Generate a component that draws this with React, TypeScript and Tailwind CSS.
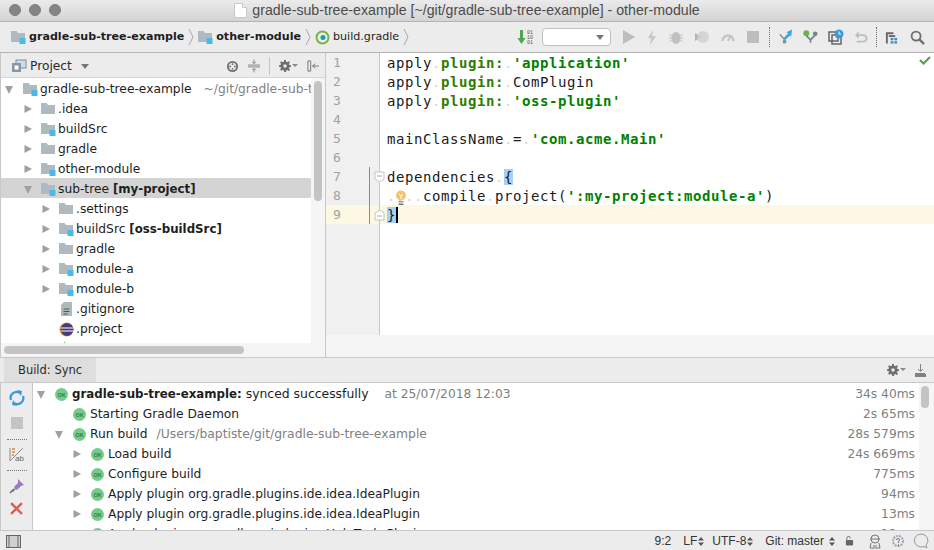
import React from "react";

const UI = "font-['Lucida_Grande','DejaVu_Sans',sans-serif]";

function Folder({ mod = false, color = "#afb9c0" }: { mod?: boolean; color?: string }) {
  return (
    <svg width="15" height="14" viewBox="0 0 15 14" className="shrink-0">
      <path d="M0 1h5.500L7 3h7v9H0z" fill={color} />
      {mod && <rect x="8.500" y="8" width="6" height="6" fill="#4ab9e8" />}
    </svg>
  );
}

function Arrow({ dir }: { dir: "r" | "d" | "n" }) {
  if (dir === "n") return <span className="w-[10px] shrink-0" />;
  return (
    <svg width="10" height="10" viewBox="0 0 10 10" className="shrink-0">
      {dir === "r" ? <path d="M1.500 1l7.500 4-7.500 4z" fill="#a0a0a0" /> : <path d="M1 2h8l-4 8z" fill="#a0a0a0" />}
    </svg>
  );
}

function Ok() {
  return (
    <svg width="13" height="13" viewBox="0 0 13 13" className="block shrink-0">
      <circle cx="6.500" cy="6.500" r="6.500" fill="#74cc8a" />
      <text x="6.500" y="8.500" textAnchor="middle" fontSize="5.500" fontWeight="700" fill="#3c7a4c" fontFamily="Liberation Sans">OK</text>
    </svg>
  );
}

function TreeRow({ depth, dir, icon, children, selected }: { depth: number; dir: "r" | "d" | "n"; icon: React.ReactNode; children: React.ReactNode; selected?: boolean }) {
  const pads: Record<number, string> = { 0: "pl-[3px]", 1: "pl-[22px]", 2: "pl-[40px]" };
  return (
    <div className={`flex h-5 items-center whitespace-nowrap pt-[2px] text-[12.250px] text-[#1e1e1e] ${pads[depth]} ${selected ? "bg-[#d4d4d4]" : ""}`}>
      <Arrow dir={dir} />
      <span className="ml-[8px] flex w-[15px] shrink-0 items-center justify-center">{icon}</span>
      <span className="ml-[2px]">{children}</span>
    </div>
  );
}

function BuildRow({ depth, dir, time, children }: { depth: number; dir: "r" | "d" | "n"; time: string; children: React.ReactNode }) {
  const pads: Record<number, string> = { 0: "pl-[3px]", 1: "pl-[21px]", 2: "pl-[39px]" };
  return (
    <div className={`flex h-5 items-center whitespace-nowrap pt-[2px] text-[12.250px] text-[#1e1e1e] ${pads[depth]}`}>
      <Arrow dir={dir} />
      <span className="ml-[9px]"><Ok /></span>
      <span className="ml-[4px] min-w-0 flex-1">{children}</span>
      <span className="pr-[4px] text-[#808080]">{time}</span>
    </div>
  );
}

const Bold = ({ children }: { children: React.ReactNode }) => <span className="text-[11.800px] font-bold">{children}</span>;
const D = () => <span className="text-[#d4d4d4]">.</span>;
const Kw = ({ children }: { children: React.ReactNode }) => <span className="font-bold text-[#2e7d00]">{children}</span>;
const S = ({ children }: { children: React.ReactNode }) => <span className="font-bold text-[#008000]">{children}</span>;

function CodeRow({ n, children, active, change, fold }: { n: number; children?: React.ReactNode; active?: boolean; change?: boolean; fold?: "open" | "close" }) {
  return (
    <div className={`flex h-[19px] ${active ? "bg-[#fcf8e4]" : ""}`}>
      <div className={`relative flex h-[19px] w-[54px] shrink-0 items-center border-r border-[#c8c8c8] pl-[7px] text-[13px] text-[#a0a0a0] ${active ? "bg-[#fcf8e4]" : "bg-[#f0f0f0]"}`}>
        <span className="font-['DejaVu_Sans_Mono',monospace]">{n}</span>
        {change && <span className="absolute left-[43px] top-0 h-[19px] w-px bg-[#7b8fb0]" />}
        {fold && (
          <svg width="11" height="12" viewBox="0 0 11 12" className="absolute left-[48px] top-[4px]">
            <path d={fold === "open" ? "M1 1h9v7l-4.500 3-4.500-3z" : "M1 11h9V4L5.500 1 1 4z"} fill="#fff" stroke="#c4c4c4" />
            <path d={fold === "open" ? "M3 5h5" : "M3 7h5"} stroke="#aaa" />
          </svg>
        )}
      </div>
      <div className="h-[19px] whitespace-pre pl-[7px] font-['DejaVu_Sans_Mono',monospace] text-[14px] leading-[21px] tracking-[0.570px] text-[#1a1a1a]">{children}</div>
    </div>
  );
}

function Gear() {
  return (
    <span className="flex items-center">
      <svg width="12" height="12" viewBox="0 0 14 14">
        <path d="M6 0h2l.4 2 1.400.6L11.500 1.400 12.800 2.800l-1.200 1.700.5 1.400 1.900.3v2l-1.900.4-.5 1.300 1.200 1.700-1.300 1.300-1.700-1.100-1.400.5L8 14H6l-.4-2.100-1.300-.5-1.700 1.100L1.200 11.200l1.200-1.700-.6-1.300L0 8V6l1.800-.3.6-1.400L1.200 2.800l1.400-1.400 1.700 1.200 1.300-.6z" fill="#6e6e6e" />
        <circle cx="7" cy="7" r="2" fill="#ececec" />
      </svg>
      <svg width="6" height="4" viewBox="0 0 6 4" className="ml-px"><path d="M0 0h6L3 3z" fill="#888" /></svg>
    </span>
  );
}

function Sep() {
  return <span className="mx-[8px] h-[20px] w-0 border-l border-dotted border-[#6e6e6e]" />;
}

function Chevron() {
  return (
    <svg width="6" height="18" viewBox="0 0 6 18" className="ml-[4px] shrink-0">
      <path d="M1 1l4 8-4 8" fill="none" stroke="#a6a6a6" />
    </svg>
  );
}

function UpDown() {
  return (
    <svg width="6" height="9" viewBox="0 0 6 9" className="ml-px shrink-0">
      <path d="M0 3.500L3 0l3 3.500zM0 5.500L3 9l3-3.500z" fill="#555" />
    </svg>
  );
}

export default function App() {
  return (
    <div className={`flex h-[550px] w-[934px] flex-col overflow-hidden bg-[#ececec] ${UI}`}>
      {/* title bar */}
      <div className="relative flex h-[22px] shrink-0 items-center justify-center border-b border-[#b4b4b4] bg-gradient-to-b from-[#ebebeb] to-[#d4d4d4]">
        <div className="absolute left-[9px] top-[4px] flex gap-[8px]">
          <span className="h-3 w-3 rounded-full border border-[#7c7c7c] bg-[#858585]" />
          <span className="h-3 w-3 rounded-full border border-[#7c7c7c] bg-[#858585]" />
          <span className="h-3 w-3 rounded-full border border-[#7c7c7c] bg-[#858585]" />
        </div>
        <svg width="13" height="15" viewBox="0 0 13 15" className="mr-[5px]">
          <path d="M.5.500h8l4 4v10H.5z" fill="#fff" stroke="#c8c8c8" />
          <path d="M8.500.500v4h4" fill="#eee" stroke="#c8c8c8" />
        </svg>
        <span className="font-['Liberation_Sans',sans-serif] text-[14.170px] leading-none text-[#4c4c4c]">gradle-sub-tree-example [~/git/gradle-sub-tree-example] - other-module</span>
      </div>

      {/* nav bar */}
      <div className="flex h-[31px] shrink-0 items-center justify-between border-b border-[#b4b4b4] bg-[#ececec]">
        <div className="flex items-center pl-[11px] text-[11.100px] text-[#1e1e1e]">
          <Folder mod />
          <span className="ml-[3px] font-bold">gradle-sub-tree-example</span>
          <Chevron />
          <span className="ml-[4px]"><Folder mod /></span>
          <span className="ml-[3px] font-bold">other-module</span>
          <Chevron />
          <svg width="15" height="15" viewBox="0 0 15 15" className="ml-[4px]">
            <circle cx="7.500" cy="7.500" r="6" fill="none" stroke="#7cb342" strokeWidth="2" />
            <circle cx="8" cy="7.500" r="2.500" fill="#19a0a8" />
          </svg>
          <span className="ml-[3px]">build.gradle</span>
          <Chevron />
        </div>
        <div className="flex items-center pr-[9px]">
          <svg width="16" height="16" viewBox="0 0 16 16" className="mr-[8px]">
            <path d="M2 1h3v8h2.500L3.500 15-.5 9H2z" fill="#4ea64e" />
            <text x="9" y="5" fontSize="5" fill="#555" fontFamily="Liberation Mono">01</text>
            <text x="9" y="10" fontSize="5" fill="#555" fontFamily="Liberation Mono">10</text>
            <text x="9" y="15" fontSize="5" fill="#555" fontFamily="Liberation Mono">01</text>
          </svg>
          <div className="mr-[12px] flex h-[18px] w-[69px] items-center justify-end rounded-[4px] border border-[#c0c0c0] bg-white pr-[6px]">
            <svg width="8" height="5" viewBox="0 0 8 5"><path d="M0 0h8L4 5z" fill="#777" /></svg>
          </div>
          <div className="mr-[2px] flex w-[136px] items-center justify-between">
            <svg width="12" height="14" viewBox="0 0 12 14"><path d="M0 0l12 7L0 14z" fill="#bdbdbd" /></svg>
            <svg width="10" height="15" viewBox="0 0 10 15"><path d="M6 0L1 8h3l-1 7 6-9H5z" fill="#c6c6c6" /></svg>
            <svg width="14" height="14" viewBox="0 0 14 14"><ellipse cx="7" cy="8" rx="4.500" ry="6" fill="#c0c0c0" /><path d="M0 4l3 2M0 8h3M0 12l3-2M14 4l-3 2M14 8h-3M14 12l-3-2" stroke="#c0c0c0" /></svg>
            <svg width="14" height="14" viewBox="0 0 14 14"><path d="M0 3l7 4-7 4z" fill="#b4b4b4" /><circle cx="8" cy="7" r="6" fill="#d0d0d0" opacity=".8" /></svg>
            <svg width="14" height="10" viewBox="0 0 14 10"><path d="M1.500 9a5.500 5.500 0 1 1 11 0" fill="none" stroke="#c4c4c4" strokeWidth="2.500" /><path d="M7 9l2-4" stroke="#c4c4c4" strokeWidth="2" /></svg>
            <span className="h-3 w-3 bg-[#bdbdbd]" />
          </div>
          <Sep />
          <div className="flex items-center gap-[10px]">
            <svg width="15" height="16" viewBox="0 0 16 16"><circle cx="7" cy="13" r="2" fill="#7f8f9c" /><path d="M2 5l5 6M7 11v2" stroke="#7f8f9c" strokeWidth="1.500" /><path d="M15 0l-6 3 2 1-5 5 2 2 5-5 1 2z" fill="#35a7e8" /></svg>
            <svg width="15" height="16" viewBox="0 0 16 16"><path d="M3 6l5 5M13 6l-5 5M8 11v3" stroke="#6f8392" strokeWidth="1.800" fill="none" /><circle cx="3.500" cy="4" r="3.200" fill="#69b44a" /><circle cx="13" cy="4.500" r="2.500" fill="#75858f" /></svg>
            <svg width="16" height="16" viewBox="0 0 16 16"><rect x="1" y="3" width="9" height="9" fill="none" stroke="#666" strokeWidth="1.500" /><rect x="4" y="6" width="9" height="9" fill="none" stroke="#666" strokeWidth="1.500" /><circle cx="11" cy="5" r="4.500" fill="#3d9ad6" /><path d="M11 2.500V5h2" stroke="#fff" fill="none" /></svg>
            <svg width="14" height="14" viewBox="0 0 15 14"><path d="M5 1L1 5l4 4V6h5a2.500 2.500 0 0 1 0 5H3v2h7a4.500 4.500 0 0 0 0-9H5z" fill="#bdbdbd" /></svg>
          </div>
          <Sep />
          <div className="flex items-center gap-[11px]">
            <svg width="14" height="15" viewBox="0 0 15 15"><path d="M1 2h8v2H3v10H1z" fill="#666" /><path d="M4 5h7v2H4z" fill="#666" /><rect x="6" y="8" width="3" height="2.500" fill="#3f8dc4" /><rect x="10" y="8" width="3" height="2.500" fill="#3f8dc4" /><rect x="6" y="11.500" width="3" height="2.500" fill="#3f8dc4" /><rect x="10" y="11.500" width="3" height="2.500" fill="#3f8dc4" /></svg>
            <svg width="15" height="15" viewBox="0 0 16 16"><circle cx="6.500" cy="6.500" r="4.800" fill="none" stroke="#707070" strokeWidth="2" /><path d="M10 10l5 5" stroke="#707070" strokeWidth="2.500" /></svg>
          </div>
        </div>
      </div>

      {/* main split */}
      <div className="flex h-[305px] shrink-0 border-b border-[#c8c8c8]">
        {/* project */}
        <div className="flex w-[326px] shrink-0 flex-col border-l border-r border-[#c8c8c8]">
          <div className="flex h-[25px] shrink-0 items-center justify-between border-b border-[#d6d6d6] bg-[#ececec] pl-[10px] pr-[6px] pt-[2px]">
            <div className="flex items-center text-[12.250px] text-[#2a2a2a]">
              <svg width="16" height="14" viewBox="0 0 16 14"><rect x="5" y="1" width="10" height="8" fill="#cfdbe6" stroke="#7a8ea0" /><rect x="1" y="4" width="9" height="9" fill="#8a97a2" /><rect x="3.500" y="6.500" width="4" height="4" fill="#fff" /></svg>
              <span className="ml-[3px]">Project</span>
              <svg width="8" height="5" viewBox="0 0 8 5" className="ml-[9px]"><path d="M0 0h8L4 5z" fill="#777" /></svg>
            </div>
            <div className="flex items-center gap-[9px]">
              <svg width="13" height="13" viewBox="0 0 14 14"><circle cx="7" cy="7" r="5" fill="none" stroke="#707070" strokeWidth="2" /><circle cx="7" cy="4.500" r="1" fill="#707070" /><circle cx="7" cy="9.500" r="1" fill="#707070" /><circle cx="4.500" cy="7" r="1" fill="#707070" /><circle cx="9.500" cy="7" r="1" fill="#707070" /></svg>
              <svg width="12" height="14" viewBox="0 0 13 14"><path d="M0 6h13M0 8h13M6.500 0v4M6.500 10v4M4.500 2.500l2 2 2-2M4.500 11.500l2-2 2 2" stroke="#808080" fill="none" /></svg>
              <span className="h-[18px] border-l border-[#c4c4c4]" />
              <Gear />
              <svg width="12" height="12" viewBox="0 0 13 13"><path d="M1 1h3v11H1z" fill="none" stroke="#707070" /><path d="M6 6.500h7M6 6.500l3-2.500M6 6.500l3 2.500" stroke="#707070" fill="none" /></svg>
            </div>
          </div>
          <div className="relative flex min-h-0 flex-1 flex-col bg-[#f5f5f5]">
            <div className="h-[265px] w-[310px] overflow-hidden bg-white">
              <div className="flex h-5 items-center whitespace-nowrap pl-[3px] pt-[2px] text-[12.250px] text-[#1e1e1e]">
                <Arrow dir="d" />
                <span className="ml-[9px]"><Folder mod /></span>
                <span className="ml-[2px]">gradle-sub-tree-example</span>
                <span className="ml-[12px] text-[#808080]">~/git/gradle-sub-t</span>
              </div>
              <TreeRow depth={1} dir="r" icon={<Folder />}>.idea</TreeRow>
              <TreeRow depth={1} dir="r" icon={<Folder mod />}>buildSrc</TreeRow>
              <TreeRow depth={1} dir="r" icon={<Folder />}>gradle</TreeRow>
              <TreeRow depth={1} dir="r" icon={<Folder mod />}>other-module</TreeRow>
              <TreeRow depth={1} dir="d" icon={<Folder mod />} selected>sub-tree <Bold>[my-project]</Bold></TreeRow>
              <TreeRow depth={2} dir="r" icon={<Folder />}>.settings</TreeRow>
              <TreeRow depth={2} dir="r" icon={<Folder mod />}>buildSrc <Bold>[oss-buildSrc]</Bold></TreeRow>
              <TreeRow depth={2} dir="r" icon={<Folder />}>gradle</TreeRow>
              <TreeRow depth={2} dir="r" icon={<Folder mod />}>module-a</TreeRow>
              <TreeRow depth={2} dir="r" icon={<Folder mod />}>module-b</TreeRow>
              <TreeRow depth={2} dir="n" icon={
                <svg width="11" height="14" viewBox="0 0 11 14"><path d="M3 0h8v14H0V3z" fill="#afb9c0" /><path d="M2.500 7h6M2.500 9.500h6M2.500 12h4" stroke="#555" /></svg>
              }>.gitignore</TreeRow>
              <TreeRow depth={2} dir="n" icon={
                <svg width="15" height="15" viewBox="0 0 15 15"><circle cx="7.500" cy="7.500" r="7" fill="#f0a63c" /><circle cx="8" cy="7.500" r="6.500" fill="#473b7c" /><path d="M2 6h12M2 9h12" stroke="#fff" /></svg>
              }>.project</TreeRow>
              <TreeRow depth={2} dir="n" icon={
                <svg width="12" height="14" viewBox="0 0 12 14"><path d="M3 0l8 5-8 5z" fill="#2aa05a" /></svg>
              }>.classpath</TreeRow>
            </div>
            <span className="absolute left-[313px] top-[3px] h-[120px] w-2 rounded bg-[#c4c4c4]" />
            <span className="absolute bottom-[3px] left-[3px] h-2 w-[240px] rounded bg-[#c4c4c4]" />
          </div>
        </div>
        {/* editor */}
        <div className="flex min-w-0 flex-1 flex-col bg-[#f5f5f5]">
          <div className="relative h-[282px] shrink-0 bg-white">
            <div className="absolute bottom-0 left-0 top-[171px] w-[54px] border-r border-[#c8c8c8] bg-[#f0f0f0]" />
            <CodeRow n={1}>apply<D /><Kw>plugin:</Kw><D /><S>'application'</S></CodeRow>
            <CodeRow n={2}>apply<D /><Kw>plugin:</Kw><D />ComPlugin</CodeRow>
            <CodeRow n={3}>apply<D /><Kw>plugin:</Kw><D /><S>'oss-plugin'</S></CodeRow>
            <CodeRow n={4} />
            <CodeRow n={5}>mainClassName<D />=<D /><S>'com.acme.Main'</S></CodeRow>
            <CodeRow n={6} />
            <CodeRow n={7} change fold="open">dependencies<D /><span className="bg-[#a6d0f7]">{"{"}</span></CodeRow>
            <CodeRow n={8} change><D /><D /><D /><D />compile<D />project(<S>':my-project:module-a'</S>)</CodeRow>
            <CodeRow n={9} change fold="close" active><span className="bg-[#a6d0f7]">{"}"}</span><span className="border-l-2 border-black" /></CodeRow>
            <svg width="12" height="16" viewBox="0 0 12 16" className="absolute left-[69px] top-[137px]">
              <circle cx="6" cy="5.500" r="5" fill="#f4c46c" />
              <path d="M4 4l2 2 2-2M6 6v3" stroke="#fff" fill="none" />
              <rect x="3.500" y="11" width="5" height="1.500" fill="#9a9a9a" />
              <rect x="3.500" y="13.500" width="5" height="1.500" fill="#777" />
            </svg>
            <svg width="12" height="9" viewBox="0 0 12 9" className="absolute right-[3px] top-[3px]">
              <path d="M1 4l3.500 3.500L11 1" fill="none" stroke="#5aa04c" strokeWidth="2.200" />
            </svg>
          </div>
        </div>
      </div>

      {/* build tool window */}
      <div className="flex h-[25px] shrink-0 items-stretch justify-between border-b border-[#c8c8c8] bg-[#ececec] pl-[4px] pr-[8px]">
        <span className="flex items-center bg-[#dedede] px-[14px] pt-[2px] text-[11.500px] text-[#2a2a2a]">Build: Sync</span>
        <div className="flex items-center gap-[9px]">
          <Gear />
          <svg width="11" height="13" viewBox="0 0 11 13"><path d="M5.500 0v7M3 5l2.500 2.500L8 5M0 9.500h10" stroke="#808080" fill="none" /><rect x="0" y="10" width="11" height="3" fill="#808080" /></svg>
        </div>
      </div>
      <div className="flex min-h-0 flex-1 border-l border-[#c8c8c8]">
        <div className="flex w-[32px] shrink-0 flex-col items-center border-r border-[#c8c8c8] bg-[#ececec] pt-[7px]">
          <svg width="16" height="16" viewBox="0 0 16 16" className="shrink-0"><path d="M2 10a6 6 0 0 1 9-7M14 6a6 6 0 0 1-9 7" fill="none" stroke="#3f97d6" strokeWidth="2.200" /><path d="M8 0l5 1-1 5zM8 16l-5-1 1-5z" fill="#3f97d6" /></svg>
          <span className="mt-[11px] h-3 w-3 shrink-0 bg-[#c4c4c4]" />
          <span className="mt-[10px] w-5 shrink-0 border-t border-dotted border-[#777]" />
          <svg width="15" height="15" viewBox="0 0 15 15" className="mt-[7px] shrink-0"><path d="M1 1v13M1 14L14 1" stroke="#8a8a8a" /><path d="M3 2h3M3 5h3M3 8h2" stroke="#d08a3c" strokeWidth="1.500" /><text x="6" y="14" fontSize="8" fill="#666" fontFamily="Liberation Sans">ab</text></svg>
          <span className="mt-[8px] w-5 shrink-0 border-t border-dotted border-[#777]" />
          <svg width="16" height="16" viewBox="0 0 16 16" className="mt-[7px] shrink-0"><path d="M9 1l6 6-3 1-4 4-1-1-3 3-1-1 3-3-1-1 4-4z" fill="#9a78c0" /><path d="M1 15l4-4" stroke="#666" strokeWidth="1.500" /></svg>
          <svg width="13" height="13" viewBox="0 0 12 12" className="mt-[8px] shrink-0"><path d="M1 1l10 10M11 1L1 11" stroke="#e05a50" strokeWidth="2.200" /></svg>
        </div>
        <div className="relative min-w-0 flex-1 overflow-hidden bg-white pr-[15px]">
          <BuildRow depth={0} dir="d" time="34s 40ms">
            <Bold>gradle-sub-tree-example:</Bold> <span className="text-[12.400px]">synced successfully</span><span className="ml-[16px] text-[#808080]">at 25/07/2018 12:03</span>
          </BuildRow>
          <BuildRow depth={1} dir="n" time="2s 65ms">Starting Gradle Daemon</BuildRow>
          <BuildRow depth={1} dir="d" time="28s 579ms">Run build<span className="ml-[9px] text-[12.350px] text-[#808080]">/Users/baptiste/git/gradle-sub-tree-example</span></BuildRow>
          <BuildRow depth={2} dir="r" time="24s 669ms">Load build</BuildRow>
          <BuildRow depth={2} dir="r" time="775ms">Configure build</BuildRow>
          <BuildRow depth={2} dir="r" time="94ms">Apply plugin org.gradle.plugins.ide.idea.IdeaPlugin</BuildRow>
          <BuildRow depth={2} dir="r" time="13ms">Apply plugin org.gradle.plugins.ide.idea.IdeaPlugin</BuildRow>
          <BuildRow depth={2} dir="r" time="12ms">Apply plugin org.gradle.api.plugins.HelpTasksPlugin</BuildRow>
          <span className="absolute bottom-0 right-0 top-0 w-[15px] bg-[#f5f5f5]" />
          <span className="absolute right-[5px] top-[3px] h-[22px] w-2 rounded bg-[#c4c4c4]" />
        </div>
      </div>

      {/* status bar */}
      <div className="flex h-[20px] shrink-0 items-center justify-between border-t border-[#c8c8c8] bg-[#ececec] pl-[6px] pr-[5px] pt-px font-['Liberation_Sans',sans-serif] text-[12px] text-[#333]">
        <svg width="15" height="13" viewBox="0 0 15 13"><rect x=".5" y=".5" width="14" height="12" fill="#d0d0d0" stroke="#666" /><path d="M3 .5v12M12 .5v12" stroke="#666" /></svg>
        <div className="flex items-center">
          <span>9:2</span>
          <span className="ml-[12px]">LF</span>
          <UpDown />
          <span className="ml-[8px]">UTF-8</span>
          <UpDown />
          <span className="ml-[12px]">Git: master</span>
          <span className="ml-[4px]"><UpDown /></span>
          <svg width="9" height="10" viewBox="0 0 10 10" className="ml-[10px]"><rect x="1" y="4" width="8" height="6" rx="1" fill="#666" /><path d="M2 4V2a2 2 0 0 1 4 0" fill="none" stroke="#666" /></svg>
          <svg width="14" height="15" viewBox="0 0 14 15" className="ml-[14px]"><circle cx="7" cy="5" r="4" fill="none" stroke="#777" /><path d="M2 5h10M3 9l-1 5h10l-1-5M5 12h4" stroke="#777" fill="none" /></svg>
          <svg width="14" height="14" viewBox="0 0 14 14" className="ml-[9px]"><circle cx="7" cy="7" r="5" fill="none" stroke="#9ab" strokeWidth="2" strokeDasharray="2 1" /><path d="M5.500 6a1.500 1.500 0 1 1 2 1.500V9M7.500 10.500v1.500" fill="none" stroke="#666" /></svg>
          <svg width="16" height="16" viewBox="0 0 16 16" className="ml-[8px]"><path d="M8 1a7 6.500 0 1 0 3 12.500l3 1.500-1-3A7 6.500 0 0 0 8 1z" fill="none" stroke="#999" /></svg>
        </div>
      </div>
    </div>
  );
}
